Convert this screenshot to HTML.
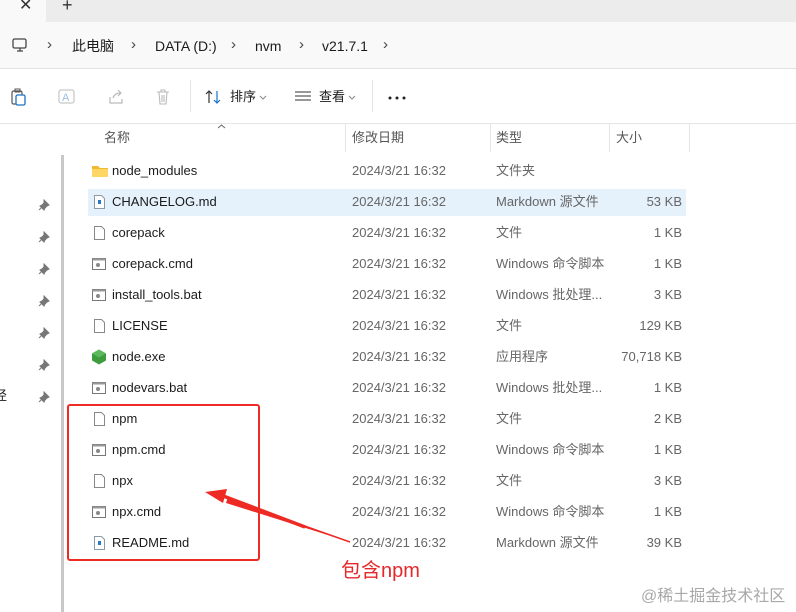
<!DOCTYPE html><html><head><meta charset="utf-8"><style>
*{margin:0;padding:0;box-sizing:border-box}
body{width:796px;height:612px;overflow:hidden;background:#fff;font-family:"Liberation Sans","Noto Sans CJK SC",sans-serif;font-size:13px;line-height:16px;color:#1b1b1b;position:relative}
.a{position:absolute;white-space:nowrap;line-height:16px}
.row{position:absolute;left:88px;width:598px;height:27px}
.row span{line-height:16px;white-space:nowrap}
.row .n{position:absolute;left:24px;top:5px}
.row .d{position:absolute;left:264px;top:5px;color:#666}
.row .t{position:absolute;left:408px;top:5px;color:#666}
.row .s{position:absolute;right:4px;top:5px;color:#666}
.row svg{position:absolute;left:3px;top:5px}
.g{color:#555}
.pin{position:absolute;left:38px;width:12px;height:12px}
</style></head><body>
<div class="a" style="left:0;top:0;width:796px;height:22px;background:#ececec"></div>
<div class="a" style="left:0;top:0;width:46px;height:22px;background:#f9f9f9"></div>
<div class="a" style="left:19px;top:-2px;font-size:16px;color:#333">✕</div>
<div class="a" style="left:62px;top:-3px;font-size:18px;color:#333">+</div>
<div class="a" style="left:0;top:22px;width:796px;height:47px;background:#f9f9f9;border-bottom:1px solid #e2e2e2"></div>
<svg class="a" style="left:12px;top:38px" width="16" height="14"><rect x="1" y="1" width="13" height="9" rx="1.5" fill="none" stroke="#444" stroke-width="1.3"/><path d="M5 13h6M8 10v3" stroke="#444" stroke-width="1.3"/></svg>
<div class="a" style="left:47px;top:37px;font-size:15px;color:#444">›</div>
<div class="a" style="left:72px;top:38px;font-size:14px">此电脑</div>
<div class="a" style="left:131px;top:37px;font-size:15px;color:#444">›</div>
<div class="a" style="left:155px;top:38px;font-size:14px">DATA (D:)</div>
<div class="a" style="left:231px;top:37px;font-size:15px;color:#444">›</div>
<div class="a" style="left:255px;top:38px;font-size:14px">nvm</div>
<div class="a" style="left:299px;top:37px;font-size:15px;color:#444">›</div>
<div class="a" style="left:322px;top:38px;font-size:14px">v21.7.1</div>
<div class="a" style="left:383px;top:37px;font-size:15px;color:#444">›</div>
<svg class="a" style="left:11px;top:88px" width="16" height="18"><rect x="1" y="3" width="10" height="13" rx="1.5" fill="none" stroke="#555" stroke-width="1.2"/><rect x="5" y="7" width="9" height="10" rx="1.5" fill="#fff" stroke="#1a73c8" stroke-width="1.3"/><rect x="4" y="1" width="5" height="3" fill="none" stroke="#555"/></svg>
<svg class="a" style="left:58px;top:88px" width="18" height="18"><rect x="1" y="2" width="15" height="13" rx="2" fill="none" stroke="#bbb"/><text x="4" y="13" font-size="11" fill="#9bbfe0" font-family="Liberation Sans">A</text></svg>
<svg class="a" style="left:107px;top:88px" width="18" height="18"><path d="M3 9v6h12v-4M6 10c1-4 4-5 8-5M11 2l3 3-3 3" fill="none" stroke="#bbb" stroke-width="1.2"/></svg>
<svg class="a" style="left:155px;top:88px" width="16" height="18"><path d="M2 4h12M6 4V2h4v2M4 4l1 12h6l1-12M7 7v7M9 7v7" fill="none" stroke="#bbb" stroke-width="1.1"/></svg>
<div class="a" style="left:190px;top:80px;width:1px;height:32px;background:#e5e5e5"></div>
<svg class="a" style="left:205px;top:89px" width="18" height="16"><path d="M4 14V2M1 5l3-3 3 3" fill="none" stroke="#333" stroke-width="1.2"/><path d="M12 2v12M9 11l3 3 3-3" fill="none" stroke="#1a73c8" stroke-width="1.2"/></svg>
<div class="a" style="left:230px;top:89px">排序</div>
<svg class="a" style="left:259px;top:95px" width="8" height="5"><path d="M1 1l3 3 3-3" fill="none" stroke="#888"/></svg>
<svg class="a" style="left:295px;top:91px" width="16" height="12"><path d="M0 1h16M0 5h16M0 9h16" stroke="#333"/></svg>
<div class="a" style="left:319px;top:89px">查看</div>
<svg class="a" style="left:348px;top:95px" width="8" height="5"><path d="M1 1l3 3 3-3" fill="none" stroke="#888"/></svg>
<div class="a" style="left:372px;top:80px;width:1px;height:32px;background:#e5e5e5"></div>
<svg class="a" style="left:388px;top:96px" width="18" height="4"><circle cx="2" cy="2" r="1.5" fill="#222"/><circle cx="9" cy="2" r="1.5" fill="#222"/><circle cx="16" cy="2" r="1.5" fill="#222"/></svg>
<div class="a" style="left:0;top:123px;width:796px;height:1px;background:#e5e5e5"></div>
<svg class="a" style="left:217px;top:124px" width="9" height="5"><path d="M1 4l3.5-3 3.5 3" fill="none" stroke="#666"/></svg>
<div class="a g" style="left:104px;top:130px">名称</div>
<div class="a" style="left:345px;top:124px;width:1px;height:28px;background:#e5e5e5"></div>
<div class="a g" style="left:352px;top:130px">修改日期</div>
<div class="a" style="left:490px;top:124px;width:1px;height:28px;background:#e5e5e5"></div>
<div class="a g" style="left:496px;top:130px">类型</div>
<div class="a" style="left:609px;top:124px;width:1px;height:28px;background:#e5e5e5"></div>
<div class="a g" style="left:616px;top:130px">大小</div>
<div class="a" style="left:689px;top:124px;width:1px;height:28px;background:#e5e5e5"></div>
<div class="a" style="left:61px;top:155px;width:3px;height:457px;background:#c8c8c8"></div>
<div class="a" style="left:-6px;top:388px">径</div>
<svg class="pin" style="top:199px" viewBox="0 0 12 12"><path d="M6 1l5 5-2 1-2 2-1 2-4-4 2-1 2-2zM4 8l-3 3" fill="#777" stroke="#777"/></svg>
<svg class="pin" style="top:231px" viewBox="0 0 12 12"><path d="M6 1l5 5-2 1-2 2-1 2-4-4 2-1 2-2zM4 8l-3 3" fill="#777" stroke="#777"/></svg>
<svg class="pin" style="top:263px" viewBox="0 0 12 12"><path d="M6 1l5 5-2 1-2 2-1 2-4-4 2-1 2-2zM4 8l-3 3" fill="#777" stroke="#777"/></svg>
<svg class="pin" style="top:295px" viewBox="0 0 12 12"><path d="M6 1l5 5-2 1-2 2-1 2-4-4 2-1 2-2zM4 8l-3 3" fill="#777" stroke="#777"/></svg>
<svg class="pin" style="top:327px" viewBox="0 0 12 12"><path d="M6 1l5 5-2 1-2 2-1 2-4-4 2-1 2-2zM4 8l-3 3" fill="#777" stroke="#777"/></svg>
<svg class="pin" style="top:359px" viewBox="0 0 12 12"><path d="M6 1l5 5-2 1-2 2-1 2-4-4 2-1 2-2zM4 8l-3 3" fill="#777" stroke="#777"/></svg>
<svg class="pin" style="top:391px" viewBox="0 0 12 12"><path d="M6 1l5 5-2 1-2 2-1 2-4-4 2-1 2-2zM4 8l-3 3" fill="#777" stroke="#777"/></svg>

<div class="row" style="top:158px"><svg width="18" height="16"><path d="M1 3h6l2 2h8v9H1z" fill="#f0b92f"/><path d="M1 6h16v8H1z" fill="#ffd663"/></svg><span class="n">node_modules</span><span class="d">2024/3/21 16:32</span><span class="t">文件夹</span></div>
<div class="row" style="top:189px;background:#e5f1fb"><svg width="16" height="16"><path d="M3.5 1.5h7l3 3v10h-10z" fill="#fff" stroke="#8a9aa8"/><rect x="7" y="6" width="3" height="4" fill="#2b78c5"/></svg><span class="n">CHANGELOG.md</span><span class="d">2024/3/21 16:32</span><span class="t">Markdown 源文件</span><span class="s">53 KB</span></div>
<div class="row" style="top:220px"><svg width="16" height="16"><path d="M3.5 1.5h7l3 3v10h-10z" fill="#fff" stroke="#888"/></svg><span class="n">corepack</span><span class="d">2024/3/21 16:32</span><span class="t">文件</span><span class="s">1 KB</span></div>
<div class="row" style="top:251px"><svg width="16" height="16"><rect x="1.5" y="2.5" width="13" height="11" fill="#fff" stroke="#777"/><rect x="1.5" y="2.5" width="13" height="2" fill="#999"/><circle cx="7" cy="9" r="2" fill="#888"/></svg><span class="n">corepack.cmd</span><span class="d">2024/3/21 16:32</span><span class="t">Windows 命令脚本</span><span class="s">1 KB</span></div>
<div class="row" style="top:282px"><svg width="16" height="16"><rect x="1.5" y="2.5" width="13" height="11" fill="#fff" stroke="#777"/><rect x="1.5" y="2.5" width="13" height="2" fill="#999"/><circle cx="7" cy="9" r="2" fill="#888"/></svg><span class="n">install_tools.bat</span><span class="d">2024/3/21 16:32</span><span class="t">Windows 批处理...</span><span class="s">3 KB</span></div>
<div class="row" style="top:313px"><svg width="16" height="16"><path d="M3.5 1.5h7l3 3v10h-10z" fill="#fff" stroke="#888"/></svg><span class="n">LICENSE</span><span class="d">2024/3/21 16:32</span><span class="t">文件</span><span class="s">129 KB</span></div>
<div class="row" style="top:344px"><svg width="16" height="16"><path d="M8 0.5l7 4v7l-7 4-7-4v-7z" fill="#3f9b3f"/><path d="M8 0.5l7 4-7 4-7-4z" fill="#5cb85c"/></svg><span class="n">node.exe</span><span class="d">2024/3/21 16:32</span><span class="t">应用程序</span><span class="s">70,718 KB</span></div>
<div class="row" style="top:375px"><svg width="16" height="16"><rect x="1.5" y="2.5" width="13" height="11" fill="#fff" stroke="#777"/><rect x="1.5" y="2.5" width="13" height="2" fill="#999"/><circle cx="7" cy="9" r="2" fill="#888"/></svg><span class="n">nodevars.bat</span><span class="d">2024/3/21 16:32</span><span class="t">Windows 批处理...</span><span class="s">1 KB</span></div>
<div class="row" style="top:406px"><svg width="16" height="16"><path d="M3.5 1.5h7l3 3v10h-10z" fill="#fff" stroke="#888"/></svg><span class="n">npm</span><span class="d">2024/3/21 16:32</span><span class="t">文件</span><span class="s">2 KB</span></div>
<div class="row" style="top:437px"><svg width="16" height="16"><rect x="1.5" y="2.5" width="13" height="11" fill="#fff" stroke="#777"/><rect x="1.5" y="2.5" width="13" height="2" fill="#999"/><circle cx="7" cy="9" r="2" fill="#888"/></svg><span class="n">npm.cmd</span><span class="d">2024/3/21 16:32</span><span class="t">Windows 命令脚本</span><span class="s">1 KB</span></div>
<div class="row" style="top:468px"><svg width="16" height="16"><path d="M3.5 1.5h7l3 3v10h-10z" fill="#fff" stroke="#888"/></svg><span class="n">npx</span><span class="d">2024/3/21 16:32</span><span class="t">文件</span><span class="s">3 KB</span></div>
<div class="row" style="top:499px"><svg width="16" height="16"><rect x="1.5" y="2.5" width="13" height="11" fill="#fff" stroke="#777"/><rect x="1.5" y="2.5" width="13" height="2" fill="#999"/><circle cx="7" cy="9" r="2" fill="#888"/></svg><span class="n">npx.cmd</span><span class="d">2024/3/21 16:32</span><span class="t">Windows 命令脚本</span><span class="s">1 KB</span></div>
<div class="row" style="top:530px"><svg width="16" height="16"><path d="M3.5 1.5h7l3 3v10h-10z" fill="#fff" stroke="#8a9aa8"/><rect x="7" y="6" width="3" height="4" fill="#2b78c5"/></svg><span class="n">README.md</span><span class="d">2024/3/21 16:32</span><span class="t">Markdown 源文件</span><span class="s">39 KB</span></div>

<div class="a" style="left:67px;top:404px;width:193px;height:157px;border:2.5px solid #ee2a24;border-radius:3px"></div>
<svg class="a" style="left:0;top:0" width="796" height="612"><path d="M350 542L228 499" stroke="#ee2a24" stroke-width="1.5"/><path d="M350 542L228 497L226 503z" fill="#ee2a24"/><path d="M205 492l22-3-4 14z" fill="#ee2a24"/><path d="M218 494L305 527" stroke="#ee2a24" stroke-width="3.5"/></svg>
<div class="a" style="left:341px;top:560px;font-size:20px;line-height:22px;color:#e5282a">包含npm</div>
<div class="a" style="left:641px;top:588px;font-size:16px;line-height:18px;color:#a8a8a8">@稀土掘金技术社区</div>
</body></html>
